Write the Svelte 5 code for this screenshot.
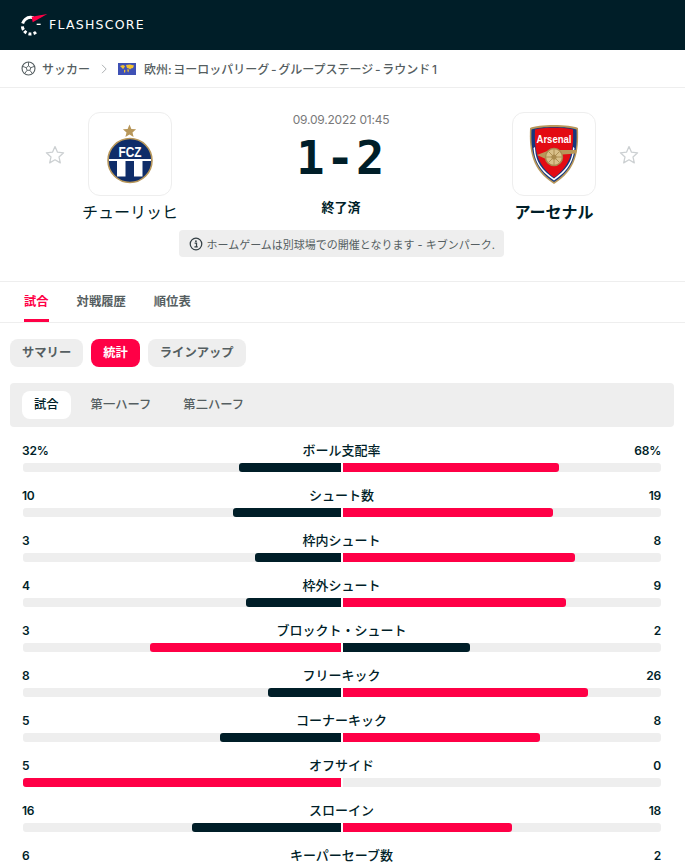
<script>
  const stats = [
    { label: 'ボール支配率', home: '32%', away: '68%', h: 32, a: 68 },
    { label: 'シュート数', home: '10', away: '19', h: 10, a: 19 },
    { label: '枠内シュート', home: '3', away: '8', h: 3, a: 8 },
    { label: '枠外シュート', home: '4', away: '9', h: 4, a: 9 },
    { label: 'ブロックト・シュート', home: '3', away: '2', h: 3, a: 2 },
    { label: 'フリーキック', home: '8', away: '26', h: 8, a: 26 },
    { label: 'コーナーキック', home: '5', away: '8', h: 5, a: 8 },
    { label: 'オフサイド', home: '5', away: '0', h: 5, a: 0 },
    { label: 'スローイン', home: '16', away: '18', h: 16, a: 18 },
    { label: 'キーパーセーブ数', home: '6', away: '2', h: 6, a: 2 }
  ];
  const homePct = (s) => Math.floor((s.h / (s.h + s.a)) * 100);
</script>

{#snippet star()}
  <svg class="star" viewBox="0 0 20 20" width="20" height="20">
    <path d="M10 1.6l2.5 5.6 6.1.6-4.6 4.1 1.3 6-5.3-3.1-5.3 3.1 1.3-6-4.6-4.1 6.1-.6z" fill="none" stroke="#ccd0d2" stroke-width="1.3" stroke-linejoin="round" />
  </svg>
{/snippet}

<div class="page">
  <header class="top">
    <svg class="mark" viewBox="0 0 114 120" width="38" height="40">
      <circle cx="62" cy="62" r="25" fill="none" stroke="#fff" stroke-width="9" pathLength="360" stroke-dasharray="20 15 20 15 20 10 25 20 95 120" transform="rotate(50 62 62)" />
      <path d="M112 27L65 35l3 17z" fill="#ff0046" />
      <rect x="80" y="56" width="12" height="4" fill="#fff" />
    </svg>
    <span class="brand">FLASHSCORE</span>
  </header>

  <nav class="crumbs">
    <svg viewBox="0 0 16 16" width="15" height="15">
      <circle cx="8" cy="8" r="6.9" fill="none" stroke="#555e61" stroke-width="1.2" />
      <path d="M8 5.3l2.5 1.8-1 2.8h-3l-1-2.8z" fill="none" stroke="#555e61" stroke-width="1" />
      <path d="M8 1.2v4.100M10.5 7.100l3.800-1.400M9.500 9.900l2.400 3.200M6.500 9.900l-2.400 3.200M5.500 7.100L1.700 5.700" stroke="#555e61" stroke-width="1" />
    </svg>
    <span class="crumb-a">サッカー</span>
    <svg class="chev" viewBox="0 0 8 12" width="7" height="10"><path d="M1 1l5 5-5 5" fill="none" stroke="#a6abad" stroke-width="1.1" /></svg>
    <svg class="flag" viewBox="0 0 18 12" width="18" height="12">
      <rect width="18" height="12" fill="#3f51b5" />
      <path d="M2 3l3-1 2 1-1 2-1 1-1-1zM8 2l4-.5 4 1-1 2.500-2 .5-1 1-1-1-2-.5zM6 6.500l1.500 1-.5 2.500-1-1zM9.500 6l1.500.8-.6 2.600-1-1.200z" fill="#f2c230" />
    </svg>
    <span class="crumb-b">欧州: ヨーロッパリーグ - グループステージ - ラウンド 1</span>
  </nav>

  <section class="match">
    {@render star()}
    <div class="team home">
      <div class="logo">
        <svg viewBox="0 0 60 72" width="60" height="72">
          <path d="M29.5 6.5l1.900 4.400 4.700.4-3.600 3.100 1.100 4.600-4.100-2.500-4.100 2.500 1.100-4.600-3.600-3.100 4.700-.4z" fill="#b8975a" />
          <circle cx="30" cy="42.5" r="22" fill="#0f2d69" stroke="#b8975a" stroke-width="1.6" />
          <rect x="9" y="41" width="42" height="2" fill="#fff" />
          <rect x="17" y="41" width="8.5" height="17.5" fill="#fff" />
          <rect x="34" y="41" width="8.5" height="17.5" fill="#fff" />
          <text x="30" y="38.5" class="fcz" text-anchor="middle" textLength="23" lengthAdjust="spacingAndGlyphs">FCZ</text>
        </svg>
      </div>
      <div class="name">チューリッヒ</div>
    </div>
    <div class="center">
      <div class="date">09.09.2022 01:45</div>
      <div class="score">1-2</div>
      <div class="status">終了済</div>
      <div class="info">
        <svg viewBox="0 0 16 16" width="14" height="14">
          <circle cx="8" cy="8" r="6.6" fill="none" stroke="#333f44" stroke-width="1.4" />
          <path d="M6.4 7h2.200v4M6.200 11.200h3.800" fill="none" stroke="#333f44" stroke-width="1.4" />
          <rect x="7" y="3.9" width="1.8" height="1.8" fill="#333f44" />
        </svg>
        <span>ホームゲームは別球場での開催となります - キブンパーク.</span>
      </div>
    </div>
    <div class="team away">
      <div class="logo">
        <svg viewBox="0 0 60 72" width="60" height="72">
          <path d="M6 10C14 6 46 6 54 10c1 24-2 42-24 56C8 52 5 34 6 10z" fill="#b8975a" />
          <path d="M7.500 11.500c8-3.500 37-3.500 45 0 1 22-2 39-22.500 52.500C10 51 6.500 33 7.500 11.500z" fill="#14387f" />
          <path d="M9.500 30c1 12 5 22 20.500 32.500C45.500 52 49.500 42 50.500 30l-1.500-1c-.5 12-4 21-19 31.500C15 50 11.500 41 11 29z" fill="#fff" />
          <path d="M11 11.500c6-2.500 32-2.500 38 0 1 20-2 36-19 48C13 47.500 10 31.500 11 11.500z" fill="#e30b13" />
          <text x="30" y="24.5" class="ars" text-anchor="middle" textLength="35" lengthAdjust="spacingAndGlyphs">Arsenal</text>
          <path d="M13 37l13-5h27l-1 3.500-20 1.500-8 5z" fill="#b8975a" />
          <circle cx="30" cy="39" r="8.5" fill="#d9c08a" stroke="#a98a4e" stroke-width="1.4" />
          <circle cx="30" cy="39" r="2.6" fill="#a98a4e" />
          <path d="M30 31v16M22 39h16M24.500 33.500l11 11M35.500 33.500l-11 11" stroke="#a98a4e" stroke-width=".9" />
        </svg>
      </div>
      <div class="name win">アーセナル</div>
    </div>
    {@render star()}
  </section>

  <nav class="tabs">
    <span class="tab active">試合</span>
    <span class="tab">対戦履歴</span>
    <span class="tab">順位表</span>
  </nav>

  <div class="pills">
    <span class="pill">サマリー</span>
    <span class="pill on">統計</span>
    <span class="pill">ラインアップ</span>
  </div>

  <div class="subtabs">
    <span class="sub on">試合</span>
    <span class="sub">第一ハーフ</span>
    <span class="sub">第二ハーフ</span>
  </div>

  <div class="stats">
    {#each stats as s}
      <div class="row">
        <div class="labels">
          <span class="val">{s.home}</span>
          <span class="lab">{s.label}</span>
          <span class="val">{s.away}</span>
        </div>
        <div class="bars">
          <div class="track left">
            <div class="fill" class:lead={s.h > s.a} style="width:{homePct(s)}%"></div>
          </div>
          <div class="track right">
            <div class="fill" class:lead={s.a > s.h} style="width:{100 - homePct(s)}%"></div>
          </div>
        </div>
      </div>
    {/each}
  </div>
</div>

<style>
  :global(body) {
    margin: 0;
    overflow: hidden;
    background: #fff;
  }
  .page {
    height: 865px;
    overflow: hidden;
    font-family: Inter, "Noto Sans CJK JP", sans-serif;
    color: #001e28;
    font-size: 12px;
  }
  .top {
    height: 50px;
    background: #001e28;
    display: flex;
    align-items: center;
    padding-left: 10px;
  }
  .mark {
    flex: none;
  }
  .brand {
    font-family: "DejaVu Sans", sans-serif;
    color: #fff;
    font-size: 12.5px;
    letter-spacing: 1.25px;
    margin-left: 1px;
    margin-top: -2px;
  }
  .crumbs {
    height: 37px;
    border-bottom: 1px solid #eeeeee;
    display: flex;
    align-items: center;
    padding-left: 21px;
    color: #555e61;
    font-weight: 500;
  }
  .crumb-a {
    margin-left: 6px;
  }
  .chev {
    margin-left: 11px;
  }
  .flag {
    margin-left: 10px;
  }
  .crumb-b {
    margin-left: 8px;
    white-space: nowrap;
    word-spacing: -1.5px;
  }
  .match {
    height: 194px;
    box-sizing: border-box;
    padding: 24px 46px 0 45px;
    border-bottom: 1px solid #eeeeee;
    display: flex;
    align-items: flex-start;
  }
  .star {
    margin-top: 33px;
    flex: none;
  }
  .team {
    flex: none;
    width: 84px;
    display: flex;
    flex-direction: column;
    align-items: center;
  }
  .team.home {
    margin-left: 23px;
  }
  .team.away {
    margin-right: 23px;
  }
  .logo {
    width: 84px;
    height: 84px;
    box-sizing: border-box;
    border: 1px solid #eeeeee;
    border-radius: 12px;
    display: flex;
    align-items: center;
    justify-content: center;
  }
  .fcz {
    font: 700 15px "Liberation Sans", sans-serif;
    fill: #fff;
  }
  .ars {
    font: 700 10px "Liberation Sans", sans-serif;
    fill: #fff;
  }
  .name {
    margin-top: 5px;
    font-size: 16px;
    line-height: 22px;
    white-space: nowrap;
  }
  .name.win {
    font-weight: 700;
  }
  .center {
    flex: 1;
    min-width: 0;
    padding-right: 2px;
    display: flex;
    flex-direction: column;
    align-items: center;
  }
  .date {
    color: #79797a;
    font-size: 12px;
    line-height: 16px;
    letter-spacing: -0.2px;
  }
  .score {
    font-family: "DejaVu Sans Mono", monospace;
    font-weight: 700;
    font-size: 47px;
    letter-spacing: 1.5px;
    line-height: 50px;
    margin-top: 5px;
  }
  .status {
    font-weight: 600;
    font-size: 13px;
    line-height: 16px;
    margin-top: 16px;
  }
  .info {
    margin-top: 15px;
    height: 27px;
    width: 325px;
    box-sizing: border-box;
    padding: 0 10px;
    background: #eeeeee;
    border-radius: 4px;
    display: flex;
    align-items: center;
    gap: 4px;
    color: #555e61;
    font-size: 11px;
    white-space: nowrap;
  }
  .info svg {
    flex: none;
  }
  .tabs {
    height: 41px;
    border-bottom: 1px solid #eeeeee;
    box-sizing: border-box;
    padding-left: 24px;
    display: flex;
    gap: 28px;
    font-weight: 600;
    font-size: 12.3px;
    color: #555e61;
  }
  .tab {
    line-height: 40px;
    height: 40px;
    box-sizing: border-box;
  }
  .tab.active {
    color: #ff0046;
    border-bottom: 3px solid #ff0046;
  }
  .pills {
    padding: 16px 0 0 10px;
    display: flex;
    gap: 8px;
    font-size: 12.3px;
  }
  .pill {
    height: 28px;
    line-height: 28px;
    padding: 0 12px;
    border-radius: 8px;
    background: #eeeeee;
    color: #555e61;
    font-weight: 600;
  }
  .pill.on {
    background: #ff0046;
    color: #fff;
  }
  .subtabs {
    margin: 16px 11px 0 10px;
    height: 44px;
    box-sizing: border-box;
    padding: 8px 12px;
    background: #eeeeee;
    border-radius: 4px;
    display: flex;
    gap: 8px;
    font-size: 12.3px;
  }
  .sub {
    height: 28px;
    line-height: 28px;
    padding: 0 12px;
    border-radius: 8px;
    color: #555e61;
    font-weight: 500;
  }
  .sub.on {
    background: #fff;
    color: #001e28;
  }
  .stats {
    padding: 15px 24px 0 23px;
  }
  .row {
    height: 45px;
  }
  .labels {
    height: 14px;
    display: flex;
    justify-content: space-between;
    align-items: center;
    margin-left: -1px;
  }
  .val {
    font-size: 12px;
    font-weight: 600;
    min-width: 30px;
    padding-top: 3px;
    letter-spacing: -0.2px;
  }
  .val:last-child {
    text-align: right;
  }
  .lab {
    font-size: 13px;
    font-weight: 500;
  }
  .bars {
    margin-top: 7px;
    display: flex;
    gap: 2px;
  }
  .track {
    flex: 1;
    height: 9px;
    background: #eeeeee;
    display: flex;
  }
  .track.left {
    justify-content: flex-end;
    border-radius: 3px 0 0 3px;
  }
  .track.right {
    border-radius: 0 3px 3px 0;
  }
  .fill {
    background: #001e28;
  }
  .fill.lead {
    background: #ff0046;
  }
  .left .fill {
    border-radius: 3px 0 0 3px;
  }
  .right .fill {
    border-radius: 0 3px 3px 0;
  }
</style>
